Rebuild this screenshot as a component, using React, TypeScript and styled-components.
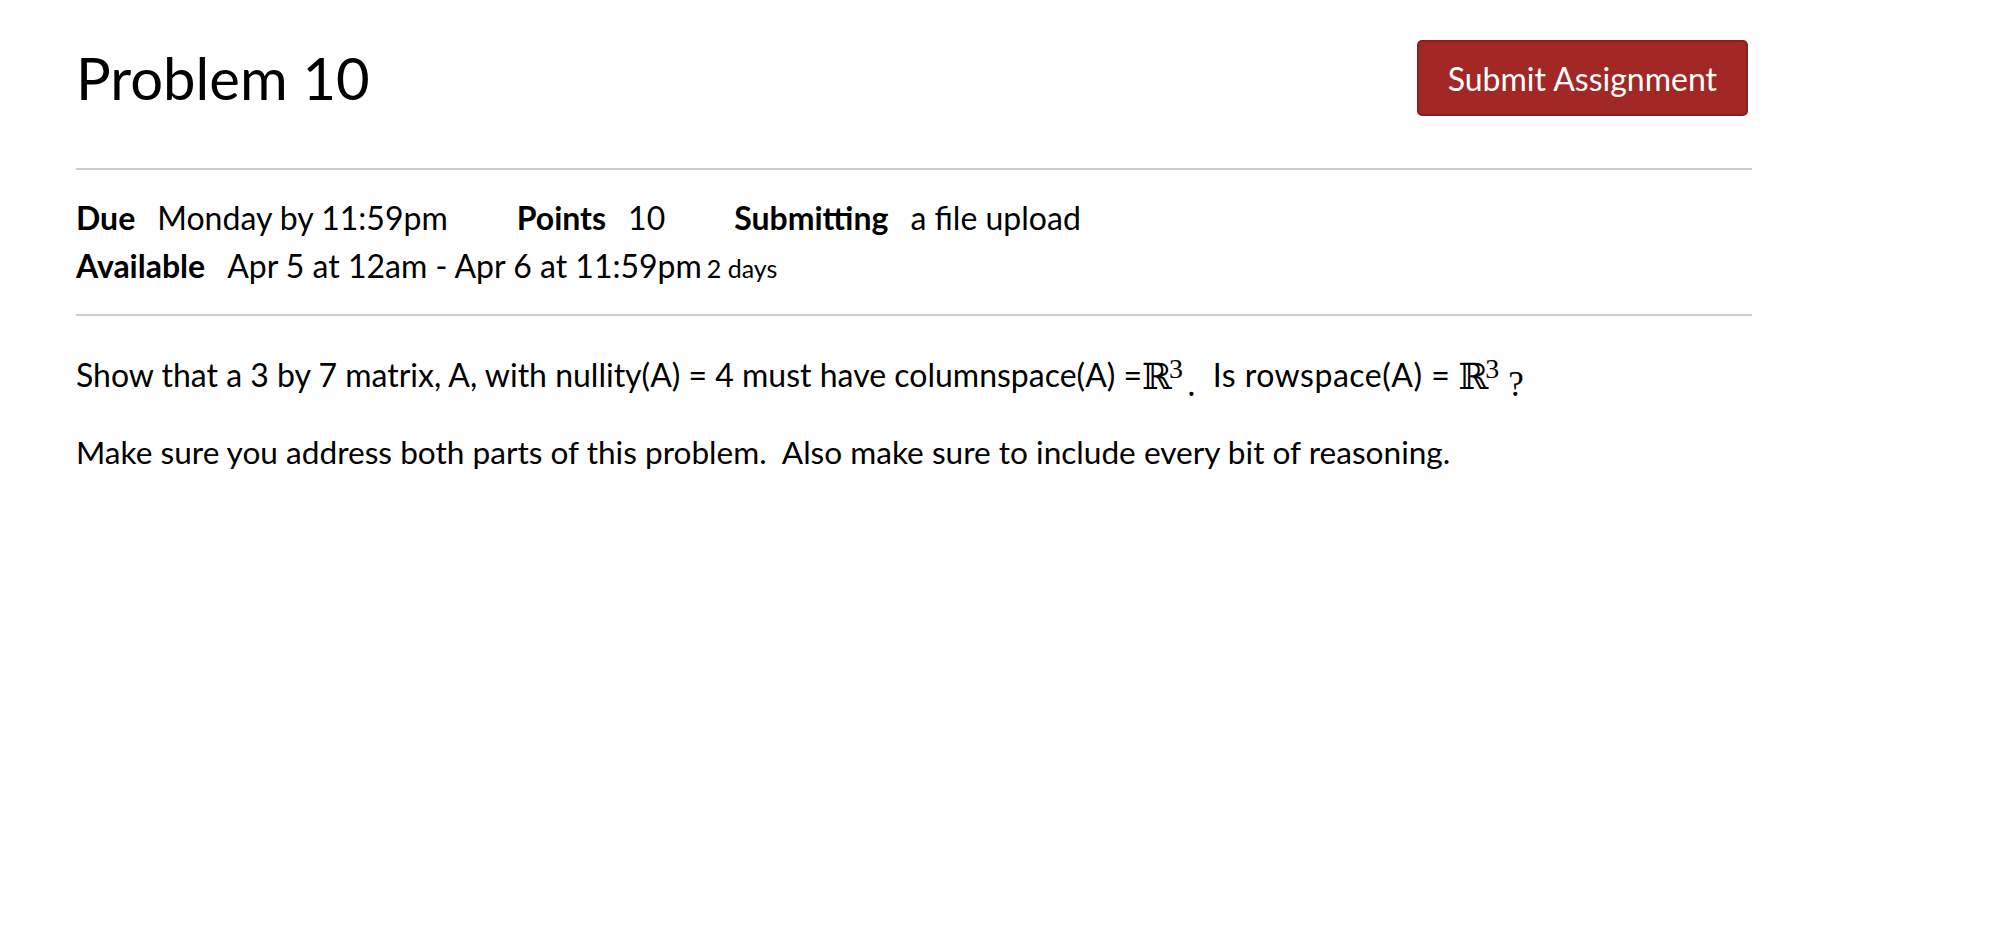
import React from 'react';
import styled, { createGlobalStyle } from 'styled-components';

const GlobalStyle = createGlobalStyle`
  html, body {
    margin: 0;
    padding: 0;
    background: #fff;
  }
  body {
    font-family: Lato, "Noto Sans", "Liberation Sans", sans-serif;
    color: #000;
    font-size: 31.6px;
    line-height: 48px;
  }
`;

const Page = styled.div`
    width: 1676px;
    padding: 0 0 0 76px;
`;

const Header = styled.header`
    display: flex;
    justify-content: space-between;
    align-items: flex-start;
    padding-top: 40px;
    padding-bottom: 52px;
    border-bottom: 2px solid #C7CDD1;
`;

const Title = styled.h1`
    margin: 2px 0 0;
    font-size: 58px;
    font-weight: 400;
    line-height: 1.25;
`;

const SubmitButton = styled.button`
    height: 76px;
    margin-right: 4px;
    padding: 0 29px;
    font-family: Lato, "Liberation Sans", sans-serif;
    font-size: 32px;
    color: #fff;
    background: #A12824;
    border: 2px solid #8C1F1D;
    border-radius: 5px;
    cursor: pointer;
`;

const Meta = styled.section`
    padding: 24px 0;
    font-size: 32px;
    border-bottom: 2px solid #C7CDD1;
`;

const MetaRow = styled.div`
    display: flex;
    gap: 69px;
`;

const MetaItem = styled.div`
    display: flex;
    align-items: baseline;
    > .label{
      font-weight: 700;
      margin-right: 22px;
    }
    > .hint{
      font-size: 25px;
      line-height: 1;
      margin-left: 5px;
    }
`;

const Description = styled.section`
    padding-top: 35px;
    > p{
      margin: 0 0 26px;
    }
    > p.lead{
      font-size: 32px;
    }
`;

const Clause = styled.span`
    letter-spacing: 0.5px;
`;

const Reals = styled.span`
    font-family: "DejaVu Serif", serif;
    font-size: 36px;
    line-height: 1;
    vertical-align: -2px;
`;

const Sup = styled.span`
    font-family: "Liberation Serif", serif;
    font-size: 28px;
    line-height: 1;
    vertical-align: 9px;
    margin-left: -3px;
`;

const MathMark = styled.span<{ gap: number }>`
    display: inline-block;
    font-family: "Liberation Serif", serif;
    font-size: 35px;
    line-height: 1;
    vertical-align: -9px;
    margin-left: ${p => p.gap}px;
`;

function R3() {
  return (
    <>
      <Reals>ℝ</Reals><Sup>3</Sup>
    </>
  );
}

function App() {
  return (
    <Page>
      <GlobalStyle/>
      <Header>
        <Title>Problem 10</Title>
        <SubmitButton>Submit Assignment</SubmitButton>
      </Header>
      <Meta>
        <MetaRow>
          <MetaItem>
            <span className="label">Due</span>
            <span>Monday by 11:59pm</span>
          </MetaItem>
          <MetaItem>
            <span className="label">Points</span>
            <span>10</span>
          </MetaItem>
          <MetaItem>
            <span className="label">Submitting</span>
            <span>a file upload</span>
          </MetaItem>
        </MetaRow>
        <MetaRow>
          <MetaItem>
            <span className="label">Available</span>
            <span>Apr 5 at 12am - Apr 6 at 11:59pm</span>
            <span className="hint">2 days</span>
          </MetaItem>
        </MetaRow>
      </Meta>
      <Description>
        <p className="lead">
          Show that a 3 by 7 matrix, A, with nullity(A) = 4 must have columnspace(A) =<R3/>
          <MathMark gap={4}>.</MathMark>
          {'\u00a0'}<Clause>{' '}Is rowspace(A) =</Clause> <R3/>
          <MathMark gap={9}>?</MathMark>
        </p>
        <p>Make sure you address both parts of this problem.&nbsp; Also make sure to include every bit of reasoning.</p>
      </Description>
    </Page>
  );
}

export default App;
